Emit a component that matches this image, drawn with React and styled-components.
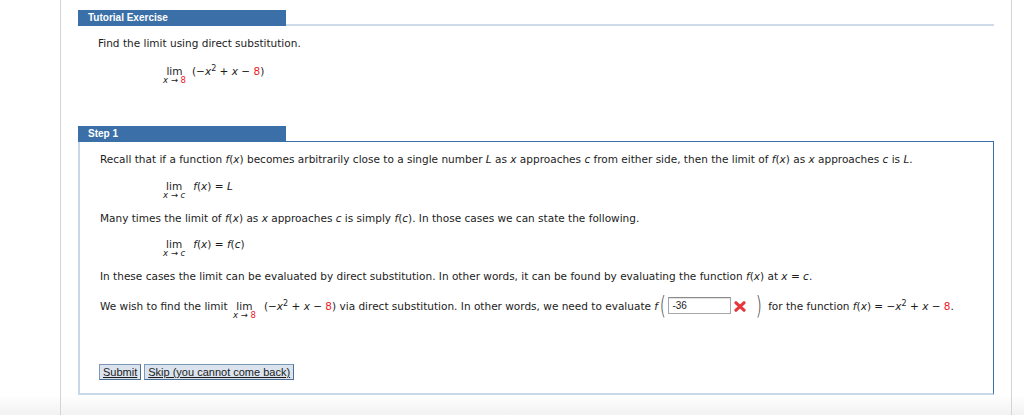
import React from "react";
import styled, { createGlobalStyle } from "styled-components";

const GlobalStyle = createGlobalStyle`
  html, body {
    margin: 0;
    padding: 0;
  }
  body {
    font-family: "DejaVu Sans", Verdana, sans-serif;
    font-size: 10.52px;
    color: #1c1c1c;
    background: #fff;
  }
`;

const Page = styled.div`
  height: 415px;
  overflow: hidden;
  background: linear-gradient(to bottom, #fff 0, #fff 395px, #f2f2f2 415px);
`;

const Column = styled.div`
  margin-left: 60px;
  width: 952px;
  height: 100%;
  box-sizing: border-box;
  border-left: 1px solid #d4d4d4;
  border-right: 1px solid #d4d4d4;
  padding: 10px 0 0 17px;
`;

const Section = styled.section`
  width: 916px;
  margin-bottom: ${(props) => props.gap || 0}px;
`;

const HeaderRow = styled.div`
  display: flex;
  align-items: flex-end;
  height: 16px;
`;

const Tab = styled.div`
  width: 208px;
  height: 16px;
  box-sizing: border-box;
  padding-left: 10px;
  background: #3a6fa7;
  color: #fff;
  font: bold 10px/16px "Liberation Sans", Arial, sans-serif;
`;

const TabRule = styled.div`
  flex: 1;
  height: ${(props) => (props.dark ? 1 : 2)}px;
  background: ${(props) => (props.dark ? "#3a6fa7" : "#cfdbe8")};
`;

const Body = styled.div`
  padding: 10px 0 0 20px;
`;

const StepBox = styled.div`
  border-left: 2px solid #c9d8e8;
  border-right: 1px solid #3a6fa7;
  border-bottom: 2px solid #c9d8e8;
  padding: 10px 0 13px 20px;
`;

const Para = styled.div`
  line-height: 14px;
  white-space: nowrap;
  margin-bottom: ${(props) => props.gap || 0}px;
`;

const MathLine = styled.div`
  line-height: 14px;
  padding-left: ${(props) => props.indent || 63}px;
  margin-bottom: ${(props) => props.gap || 0}px;
  white-space: nowrap;
`;

const Lim = styled.span`
  display: inline-flex;
  flex-direction: column;
  align-items: center;
  vertical-align: top;
  margin: 0 ${(props) => props.after || 8}px 0 ${(props) => props.lead || 0}px;
`;

const LimWord = styled.span`
  line-height: 14px;
`;

const LimSub = styled.span`
  font-size: 8.5px;
  line-height: 9px;
  margin-top: -2px;
  white-space: nowrap;
`;

const V = styled.i`
  font-style: italic;
`;

const Red = styled.span`
  color: #e8202a;
`;

const Sup = styled.sup`
  font-size: 8px;
  line-height: 0;
  vertical-align: 4px;
`;

const AnswerRow = styled.div`
  display: flex;
  align-items: flex-start;
  white-space: nowrap;
  line-height: 14px;
  margin-bottom: ${(props) => props.gap || 0}px;
`;

const Chunk = styled.span`
  padding-top: 4px;
  white-space: pre;
`;

const Paren = styled.span`
  font-family: "DejaVu Sans", sans-serif;
  font-weight: 200;
  font-size: 24px;
  line-height: 22px;
  color: #333;
  transform: scaleX(0.65);
  margin: 0 ${(props) => props.right || 0}px 0 ${(props) => props.left || 0}px;
`;

const Answer = styled.input`
  width: 63px;
  height: 17px;
  box-sizing: border-box;
  margin: 2px 0 0 0;
  padding: 0 3px;
  border: 1px solid #a8a8a8;
  border-top-color: #8a8a8a;
  box-shadow: inset 0 1px 1px rgba(0, 0, 0, 0.12);
  font: 10px "Liberation Sans", Arial, sans-serif;
  color: #222;
  background: #fff;
  outline: none;
`;

const Wrong = styled.svg`
  width: 12px;
  height: 11px;
  margin: 6px 8px 0 3px;
  flex: none;
`;

const Buttons = styled.div`
  display: flex;
  gap: 3px;
  margin-left: -1px;
`;

const Button = styled.button`
  height: 16px;
  padding: 0 3px;
  box-sizing: border-box;
  border: 1px solid #4d6f96;
  border-top-color: #7d98b8;
  border-left-color: #7d98b8;
  background: #dbe4ee;
  color: #1c1c1c;
  font: 11px/14px "Liberation Sans", Arial, sans-serif;
  text-decoration: underline;
  cursor: pointer;
`;

const LimX = ({ to, after, lead }) => (
  <Lim after={after} lead={lead}>
    <LimWord>lim</LimWord>
    <LimSub>
      <V>x</V> → {to}
    </LimSub>
  </Lim>
);

const Poly = () => (
  <>
    (−<V>x</V>
    <Sup>2</Sup> + <V>x</V> − <Red>8</Red>)
  </>
);

const Fx = ({ arg = "x" }) => (
  <>
    <V>f</V>(<V>{arg}</V>)
  </>
);

export default function App() {
  return (
    <Page>
      <GlobalStyle />
      <Column>
        <Section gap={41}>
          <HeaderRow>
            <Tab>Tutorial Exercise</Tab>
            <TabRule />
          </HeaderRow>
          <Body>
            <Para gap={14}>Find the limit using direct substitution.</Para>
            <MathLine indent={65}>
              <LimX to={<Red>8</Red>} after={6} />
              <Poly />
            </MathLine>
          </Body>
        </Section>

        <Section>
          <HeaderRow>
            <Tab>Step 1</Tab>
            <TabRule dark />
          </HeaderRow>
          <StepBox>
            <Para gap={13}>
              Recall that if a function <Fx /> becomes arbitrarily close to a
              single number <V>L</V> as <V>x</V> approaches <V>c</V> from either
              side, then the limit of <Fx /> as <V>x</V> approaches <V>c</V> is{" "}
              <V>L</V>.
            </Para>
            <MathLine gap={11}>
              <LimX to={<V>c</V>} />
              <Fx /> = <V>L</V>
            </MathLine>
            <Para gap={12}>
              Many times the limit of <Fx /> as <V>x</V> approaches <V>c</V> is
              simply <Fx arg="c" />. In those cases we can state the following.
            </Para>
            <MathLine gap={11}>
              <LimX to={<V>c</V>} />
              <Fx /> = <Fx arg="c" />
            </MathLine>
            <Para gap={12}>
              In these cases the limit can be evaluated by direct substitution.
              In other words, it can be found by evaluating the function{" "}
              <Fx /> at <V>x</V> = <V>c</V>.
            </Para>
            <AnswerRow gap={44}>
              <Chunk>We wish to find the limit </Chunk>
              <Chunk>
                <LimX to={<Red>8</Red>} lead={2} />
                <Poly /> via direct substitution. In other words, we need to
                evaluate <V>f</V>
              </Chunk>
              <Paren right={1}>(</Paren>
              <Answer readOnly defaultValue="-36" />
              <Wrong viewBox="0 0 12 11">
                <path
                  d="M2 1.8 L10 9.2 M10 1.8 L2 9.2"
                  stroke="#e5383d"
                  strokeWidth="3.2"
                  strokeLinecap="round"
                />
              </Wrong>
              <Paren right={1}>)</Paren>
              <Chunk>
                {" "}for the function <Fx /> = −<V>x</V>
                <Sup>2</Sup> + <V>x</V> − <Red>8</Red>.
              </Chunk>
            </AnswerRow>
            <Buttons>
              <Button>Submit</Button>
              <Button>Skip (you cannot come back)</Button>
            </Buttons>
          </StepBox>
        </Section>
      </Column>
    </Page>
  );
}
